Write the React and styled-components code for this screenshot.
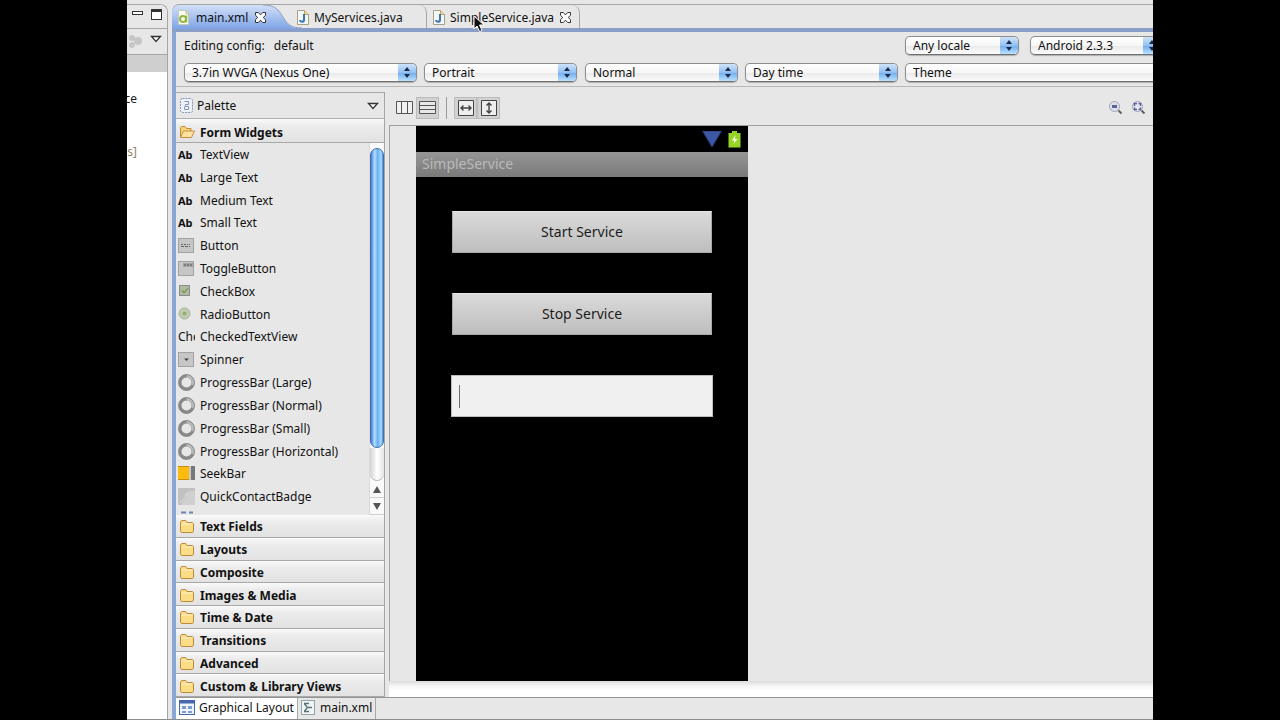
import React from "react";
import styled, { createGlobalStyle, css } from "styled-components";

const GlobalStyle = createGlobalStyle`
  * {
    box-sizing: border-box;
  }
  body {
    margin: 0;
    background: #000;
    color: #111;
    font-family: "Noto Sans", "Open Sans", sans-serif;
    font-size: 12px;
  }
  button,
  select,
  input {
    margin: 0;
    padding: 0;
    border: 0;
    color: inherit;
    font: inherit;
  }
`;

/* window frame */

const Screen = styled.div`
  display: flex;
  height: 100vh;
  padding: 0 127px;
  background: #000;
`;

const Workbench = styled.div`
  flex: 1;
  min-width: 0;
  display: flex;
  flex-direction: column;
  overflow: hidden;
  background: #e7e7e7;
  border-bottom: 1px solid #8c8c8c;
`;

const Panes = styled.div`
  flex: 1;
  min-height: 0;
  display: flex;
  gap: 4px;
  padding-top: 4px;
`;

/* left view, mostly scrolled off */

const SideView = styled.aside`
  width: 41px;
  flex: none;
  display: flex;
  flex-direction: column;
  background: #fff;
  border: 1px solid #a5a5a5;
  border-width: 1px 1px 0 0;
  border-top-right-radius: 8px;
  overflow: hidden;
`;

const SideBar = styled.div`
  display: flex;
  align-items: center;
  justify-content: flex-end;
  gap: 8px;
  height: ${(p) => p.$height}px;
  padding: 0 5px ${(p) => p.$lift || 0}px 0;
  background: #e7e7e7;
  border-bottom: 1px solid #a5a5a5;
`;

const SideSelection = styled.div`
  height: 17px;
  background: #cfcfcf;
`;

const SideLines = styled.div`
  display: flex;
  flex-direction: column;
  align-items: flex-end;
  gap: 35px;
  width: 10px;
  padding-top: 18px;
  line-height: 18px;
`;

const SideLine = styled.span`
  color: ${(p) => (p.$muted ? "#8f8468" : "#1a1a1a")};
`;

/* editor tabs */

const Editor = styled.main`
  flex: 1;
  min-width: 0;
  display: flex;
  flex-direction: column;
  border-left: 4px solid #8aa6d6;
  border-top-left-radius: 8px;
`;

const TabStrip = styled.div`
  flex: none;
  display: flex;
  height: 28px;
  margin-left: -4px;
  border-top: 1px solid #a5a5a5;
  border-bottom: 4px solid #8a9fc8;
  border-top-left-radius: 8px;
`;

const Tab = styled.button`
  position: relative;
  display: flex;
  align-items: center;
  gap: ${(p) => (p.$active ? 6 : 5)}px;
  width: ${(p) => p.$width}px;
  padding: 2px 0 0 ${(p) => (p.$active ? 5 : 6)}px;
  background: none;
  white-space: nowrap;
  ${(p) =>
    !p.$active &&
    css`
      border-right: 1px solid #a5a5a5;
      border-top-right-radius: 8px;
    `}
  > * {
    position: relative;
  }
`;

const TabShape = styled.svg`
  && {
    position: absolute;
    left: 0;
    top: 0;
  }
`;

const Pointer = styled.svg`
  && {
    position: absolute;
    left: 46px;
    top: 10px;
  }
`;

/* configuration rows */

const ConfigRow = styled.div`
  flex: none;
  display: flex;
  align-items: center;
  gap: 7px;
  height: ${(p) => p.$height}px;
  padding-left: 8px;
  overflow: hidden;
  border-bottom: ${(p) => (p.$ruled ? "1px solid #b9b9b9" : "0")};
`;

const ConfigText = styled.span`
  margin-right: ${(p) => (p.$push ? "auto" : "2px")};
`;

const LocaleGroup = styled.div`
  flex: none;
  display: flex;
  gap: 11px;
  width: 248px;
`;

const RowDivider = styled.div`
  width: 1px;
  height: 100%;
  margin: 0 -2px 0 -4px;
  background: #bdbdbd;
`;

const SelectBox = styled.label`
  position: relative;
  flex: none;
  display: flex;
  width: ${(p) => p.$width}px;
  height: 19px;
  border: 1px solid #8d8d8d;
  border-bottom-color: #6f6f6f;
  border-radius: 5px;
  overflow: hidden;
  background: linear-gradient(#fff, #f7f7f7 50%, #e9e9e9 51%, #fbfbfb);
  box-shadow: 0 1px 1px rgba(0, 0, 0, 0.25);

  select {
    appearance: none;
    width: 100%;
    padding-left: 7px;
    background: none;
    line-height: 17px;
    outline: none;
  }
`;

const SelectArrows = styled.svg`
  position: absolute;
  top: 0;
  right: 0;
  width: 18px;
  height: 17px;
  background: linear-gradient(#cfe3fa, #93c0f2 50%, #6fabec 51%, #b9e2ff);
  pointer-events: none;
`;

/* palette */

const Body = styled.div`
  flex: 1;
  min-height: 0;
  display: flex;
`;

const Palette = styled.section`
  flex: none;
  display: flex;
  flex-direction: column;
  width: 209px;
  margin-top: 5px;
  border: 1px solid #a5a5a5;
  border-width: 1px 1px 0 0;
`;

const PaletteHeader = styled.header`
  flex: none;
  display: flex;
  align-items: center;
  gap: 4px;
  height: 26px;
  padding: 0 5px 0 4px;
  border-bottom: 1px solid #b0b0b0;
  span {
    flex: 1;
  }
`;

const Drawer = styled.button`
  display: flex;
  align-items: center;
  gap: 5px;
  width: 100%;
  min-height: 0;
  padding: 2px 0 0 3px;
  background: linear-gradient(#fafafa, #ececec 30%, #e2e2e2);
  border-bottom: 1px solid #a8a8a8;
  color: #111;
  font-weight: 700;
  text-align: left;
`;

const OpenDrawer = styled(Drawer)`
  flex: none;
  height: 24px;
  padding-top: 3px;
`;

const ListArea = styled.div`
  flex: 1;
  min-height: 0;
  display: flex;
  overflow: hidden;
`;

const WidgetList = styled.ul`
  flex: 1;
  display: grid;
  grid-auto-rows: 1fr;
  height: 388px;
  margin: 0;
  padding: 0;
  list-style: none;
`;

const Widget = styled.li`
  display: flex;
  align-items: center;
  gap: 5px;
  padding-left: 2px;
  white-space: nowrap;
`;

const IconSlot = styled.span`
  flex: none;
  display: flex;
  width: 17px;
  overflow: hidden;
  font-size: ${(p) => (p.$bold ? 11 : 12)}px;
  font-weight: ${(p) => (p.$bold ? 700 : 400)};
`;

const ScrollTrack = styled.div`
  display: flex;
  flex-direction: column;
  width: 15px;
  padding-top: 5px;
  background: #fbfbfb;
  border-left: 1px solid #dadada;
`;

const ScrollThumb = styled.div`
  height: 300px;
  border: 1px solid #3f6cb4;
  border-radius: 7px;
  background: linear-gradient(90deg, #3f7fd6, #b5dcff 30%, #6bb0f4 55%, #a5dcff 85%, #4d86c9);
`;

const ScrollRest = styled.div`
  flex: 1;
  border-bottom: 1px solid #b5b5b5;
  border-radius: 0 0 7px 7px;
  background: linear-gradient(90deg, #d3d3d3, #fff 50%, #e4e4e4);
`;

const ScrollArrow = styled.button`
  display: flex;
  align-items: center;
  justify-content: center;
  height: 17px;
  background: #fafafa;
  border-bottom: 1px solid #d0d0d0;
`;

const Drawers = styled.div`
  flex: none;
  display: grid;
  grid-auto-rows: 1fr;
  height: 182px;
`;

/* layout canvas */

const CanvasSide = styled.section`
  flex: 1;
  min-width: 0;
  display: flex;
  flex-direction: column;
  margin-left: 4px;
`;

const CanvasTools = styled.div`
  flex: none;
  display: flex;
  align-items: center;
  height: 38px;
  padding: 3px 3px 0 4px;
`;

const ToolButton = styled.button`
  display: flex;
  align-items: center;
  justify-content: center;
  width: 23px;
  height: 22px;
  background: ${(p) => (p.$pressed ? "#d2d2d2" : "none")};
  outline: ${(p) => (p.$pressed ? "1px solid #bcbcbc" : "0")};
  outline-offset: -1px;
`;

const ToolDivider = styled.div`
  width: 1px;
  height: 22px;
  margin: 0 7px;
  background: #9a9a9a;
`;

const Spacer = styled.div`
  flex: 1;
`;

const Canvas = styled.div`
  flex: 1;
  min-height: 0;
  display: flex;
  padding-left: 26px;
  border: 1px solid #a0a0a0;
  border-width: 1px 0 0 1px;
`;

const HorizontalTrack = styled.div`
  flex: none;
  height: 16px;
  background: linear-gradient(#dcdcdc, #f4f4f4 30%, #fff 60%);
`;

const Device = styled.div`
  display: flex;
  flex-direction: column;
  width: 332px;
  background: #000;
  color: #1c1c1c;
  font-family: "Noto Sans", sans-serif;
  font-size: 14px;
`;

const StatusBar = styled.div`
  display: flex;
  align-items: center;
  justify-content: flex-end;
  gap: 6px;
  height: 26px;
  padding-right: 7px;
`;

const TitleBar = styled.div`
  height: 25px;
  padding-left: 6px;
  background: linear-gradient(#959595, #7a7a7a);
  color: #b9b9b9;
  line-height: 24px;
`;

const DeviceBody = styled.div`
  display: flex;
  flex-direction: column;
  gap: 40px;
  padding: 34px 36px 0;
`;

const DeviceButton = styled.button`
  height: 42px;
  padding-bottom: 2px;
  border: 1px solid #a9a9a9;
  border-top-color: #e6e6e6;
  background: linear-gradient(#dadada, #bebebe);
`;

const EditField = styled.label`
  position: relative;
  display: flex;
  height: 42px;
  margin: 0 -1px;
  border: 1px solid #bdbdbd;
  background: #f0f0f0;
  input {
    flex: 1;
    padding: 0 10px;
    background: none;
    outline: none;
  }
`;

const Caret = styled.span`
  position: absolute;
  left: 7px;
  top: 9px;
  width: 1px;
  height: 23px;
  background: #6f6f6f;
`;

/* bottom page tabs */

const PageTabs = styled.nav`
  flex: none;
  display: flex;
  height: 22px;
  border-top: 1px solid #959595;
`;

const PageTab = styled.button`
  display: flex;
  align-items: center;
  gap: 4px;
  padding: 0 3px 2px;
  background: ${(p) => (p.$active ? "#fff" : "#e7e7e7")};
  border-right: 1px solid #a9a9a9;
  white-space: nowrap;
`;

const CloseIcon = () => (
  <svg width="13" height="13" viewBox="0 0 13 13" fill="#fff" stroke="#333">
    <path d="M1.5 1.5h2.8l2.2 2.4 2.2-2.4h2.8v2.8L9.2 6.5l2.3 2.2v2.8H8.7L6.5 9.2l-2.2 2.3H1.5V8.7l2.3-2.2-2.3-2.2z" />
  </svg>
);

const AndroidFileIcon = () => (
  <svg width="13" height="15" viewBox="0 0 13 15">
    <path d="M1.5.5h7l3 3v11h-10z" fill="#fbfdf6" stroke="#c5cbb4" />
    <path d="M9 1v3h3" fill="none" stroke="#d0b66a" />
    <circle cx="6" cy="9" r="3" fill="none" stroke="#8fb843" strokeWidth="2" />
    <path d="M9.5 5.5v7" stroke="#8fb843" strokeWidth="1.5" />
  </svg>
);

const JavaFileIcon = () => (
  <svg width="12" height="15" viewBox="0 0 12 15">
    <path d="M.5.5h7l4 4v10H.5z" fill="#f3f7fb" stroke="#a8a183" />
    <path d="M7.5.5v4h4" fill="#f5dc9c" stroke="#bda25c" />
    <path d="M7 4v5.5a2 2 0 0 1-4 .5" fill="none" stroke="#3a75ab" strokeWidth="2" />
  </svg>
);

const MenuTriangle = () => (
  <svg width="12" height="8" viewBox="0 0 12 8">
    <path d="M1.5 1.5h9l-4.5 5z" fill="#fff" stroke="#333" strokeWidth="1.3" />
  </svg>
);

const FolderIcon = () => (
  <svg width="16" height="15" viewBox="0 0 16 15">
    <path
      d="M1.5 12V3.2L2.7 1.5h4l1.3 2h5.5l1 1V12l-1 1.5h-11z"
      fill="#fbdc87"
      stroke="#c08a3a"
    />
    <path d="M2.5 5h11" stroke="#fff2c4" />
  </svg>
);

const OpenFolderIcon = () => (
  <svg width="16" height="14" viewBox="0 0 16 14">
    <path d="M1.5 12V2.5l1-1h3.5l1.5 2h4.5V6" fill="#f8d27c" stroke="#c08a3a" />
    <path d="M1.5 12.5l3-6.5h11l-3 6.5z" fill="#fde3a0" stroke="#c98f3c" />
  </svg>
);

const PaletteIcon = () => (
  <svg width="13" height="15" viewBox="0 0 13 15" fill="none">
    <rect x=".5" y=".5" width="12" height="14" rx="2" fill="#eef2f8" stroke="#8195b5" strokeDasharray="2 1" />
    <path d="M4.5 3.5h4v3h-3v2h3v3h-4v-3" stroke="#8397bb" />
  </svg>
);

const PixelBox = ({ children }) => (
  <svg width="16" height="16" viewBox="0 0 16 16">
    <rect x=".5" y=".5" width="15" height="14" fill="#c6c6c6" stroke="#a2a2a2" />
    {children}
  </svg>
);

const RingIcon = () => (
  <svg width="17" height="17" viewBox="0 0 17 17" fill="none" strokeWidth="3">
    <circle cx="8.5" cy="8.5" r="6.5" stroke="#8a8a8a" />
    <path d="M8.5 2a6.5 6.5 0 0 1 6 9" stroke="#b9b9b9" />
    <circle cx="8.5" cy="8.5" r="8" stroke="#777" strokeWidth=".7" />
  </svg>
);

const widgetIcons = {
  button: (
    <PixelBox>
      <path d="M3 6.5h2m1 0h2m1 0h1m1 0h1M3 8.5h3m1 0h3m1 0h1" stroke="#666" />
    </PixelBox>
  ),
  toggle: (
    <PixelBox>
      <rect x="5" y="2" width="10" height="4" fill="#a5a5a5" />
      <path d="M6 4h2m1 0h2m1 0h2" stroke="#555" />
    </PixelBox>
  ),
  check: (
    <svg width="14" height="16" viewBox="0 0 14 16">
      <rect x="1.5" y="2.5" width="10" height="10" fill="#aeb99f" stroke="#8c8c8c" />
      <path d="M4 7.5l2 2 4-4" fill="none" stroke="#7b9b59" strokeWidth="1.5" />
    </svg>
  ),
  radio: (
    <svg width="14" height="16" viewBox="0 0 14 16">
      <circle cx="6.5" cy="7.5" r="5.5" fill="#c0ccb2" stroke="#a3b292" />
      <circle cx="6.5" cy="7.5" r="2" fill="#94ad79" />
    </svg>
  ),
  spinner: (
    <PixelBox>
      <path d="M6 6.5h5L8.5 9z" fill="#444" />
    </PixelBox>
  ),
  ring: <RingIcon />,
  seek: (
    <svg width="17" height="15" viewBox="0 0 17 15">
      <rect width="11" height="14" fill="#fdbb0d" />
      <path d="M0 .5h11M0 13.5h11" stroke="#c48f15" />
      <rect x="11" width="2" height="14" fill="#c9c9c9" />
      <rect x="13" width="4" height="14" fill="#777" />
    </svg>
  ),
  badge: (
    <svg width="17" height="17" viewBox="0 0 17 17">
      <rect width="17" height="17" fill="#c1c1c1" />
      <path d="M4 17c0-5 3-6 5-6-3-5 2-9 8-8v14z" fill="#d0d0d0" />
      <path d="M2 15c2-4 4-3 5-5s0-5 3-6" stroke="#dedede" fill="none" />
    </svg>
  ),
  clipped: (
    <svg width="17" height="17" viewBox="0 0 17 17">
      <path d="M3 1.5h5m3 0h4" stroke="#6d86b5" strokeWidth="2" />
    </svg>
  ),
};

const widgets = [
  { name: "TextView", text: "Ab", bold: true },
  { name: "Large Text", text: "Ab", bold: true },
  { name: "Medium Text", text: "Ab", bold: true },
  { name: "Small Text", text: "Ab", bold: true },
  { name: "Button", icon: "button" },
  { name: "ToggleButton", icon: "toggle" },
  { name: "CheckBox", icon: "check" },
  { name: "RadioButton", icon: "radio" },
  { name: "CheckedTextView", text: "Che" },
  { name: "Spinner", icon: "spinner" },
  { name: "ProgressBar (Large)", icon: "ring" },
  { name: "ProgressBar (Normal)", icon: "ring" },
  { name: "ProgressBar (Small)", icon: "ring" },
  { name: "ProgressBar (Horizontal)", icon: "ring" },
  { name: "SeekBar", icon: "seek" },
  { name: "QuickContactBadge", icon: "badge" },
  { name: "", icon: "clipped" },
];

const drawers = [
  "Text Fields",
  "Layouts",
  "Composite",
  "Images & Media",
  "Time & Date",
  "Transitions",
  "Advanced",
  "Custom & Library Views",
];

const Select = ({ label, value, width }) => (
  <SelectBox $width={width}>
    <select aria-label={label} defaultValue={value}>
      <option>{value}</option>
    </select>
    <SelectArrows viewBox="0 0 18 17">
      <path d="M6 7l3-4 3 4zM6 10l3 4 3-4z" fill="#1c2c48" />
    </SelectArrows>
  </SelectBox>
);

const SidePane = () => (
  <SideView>
    <SideBar $height={24} $lift={4}>
      <svg width="11" height="13" viewBox="0 0 11 13">
        <rect x=".5" y="3.5" width="10" height="3" fill="#fff" stroke="#333" />
      </svg>
      <svg width="11" height="11" viewBox="0 0 11 11">
        <rect x=".5" y=".5" width="10" height="10" fill="#fff" stroke="#333" />
        <path d="M0 2h11" stroke="#333" strokeWidth="2" />
      </svg>
    </SideBar>
    <SideBar $height={26} $lift={6}>
      <svg width="14" height="20" viewBox="0 0 14 20" fill="#c6c6c6">
        <circle cx="4" cy="9" r="3" />
        <circle cx="10" cy="12" r="4" />
        <circle cx="4" cy="16" r="3" />
      </svg>
      <MenuTriangle />
    </SideBar>
    <SideSelection />
    <SideLines>
      <SideLine>ce</SideLine>
      <SideLine $muted>s]</SideLine>
    </SideLines>
  </SideView>
);

const EditorTabs = () => (
  <TabStrip>
    <Tab $width={119} $active>
      <TabShape width="130" height="24" viewBox="0 0 130 24">
        <defs>
          <linearGradient id="tab" x1="0" y1="0" x2="0" y2="1">
            <stop offset="0" stopColor="#d3e0f8" />
            <stop offset="1" stopColor="#7da3e6" />
          </linearGradient>
        </defs>
        <path d="M0 24V8q0-8 8-8h83c12 0 16 5 20 12s8 12 19 12z" fill="url(#tab)" />
        <path d="M91 0c12 0 16 5 20 12s8 11 19 11" fill="none" stroke="#8fa0bf" />
      </TabShape>
      <AndroidFileIcon />
      <span>main.xml</span>
      <CloseIcon />
    </Tab>
    <Tab $width={136}>
      <JavaFileIcon />
      <span>MyServices.java</span>
    </Tab>
    <Tab $width={153}>
      <JavaFileIcon />
      <span>SimpleService.java</span>
      <CloseIcon />
      <Pointer width="12" height="18" viewBox="0 0 12 18">
        <path d="M1 1v13l3-3 2.5 5.5 2.5-1L6.5 10H11z" fill="#111" stroke="#fff" />
      </Pointer>
    </Tab>
  </TabStrip>
);

const PalettePane = () => (
  <Palette>
    <PaletteHeader>
      <PaletteIcon />
      <span>Palette</span>
      <MenuTriangle />
    </PaletteHeader>
    <OpenDrawer>
      <OpenFolderIcon />
      Form Widgets
    </OpenDrawer>
    <ListArea>
      <WidgetList>
        {widgets.map((w) => (
          <Widget key={w.name}>
            <IconSlot $bold={w.bold}>{w.text || widgetIcons[w.icon]}</IconSlot>
            {w.name}
          </Widget>
        ))}
      </WidgetList>
      <ScrollTrack>
        <ScrollThumb />
        <ScrollRest />
        <ScrollArrow aria-label="Scroll up">
          <svg width="8" height="7" viewBox="0 0 8 7">
            <path d="M4 0l4 7H0z" fill="#555" />
          </svg>
        </ScrollArrow>
        <ScrollArrow aria-label="Scroll down">
          <svg width="8" height="7" viewBox="0 0 8 7">
            <path d="M4 7l4-7H0z" fill="#555" />
          </svg>
        </ScrollArrow>
      </ScrollTrack>
    </ListArea>
    <Drawers>
      {drawers.map((name) => (
        <Drawer key={name}>
          <FolderIcon />
          {name}
        </Drawer>
      ))}
    </Drawers>
  </Palette>
);

const Toolbar = () => (
  <CanvasTools>
    <ToolButton aria-label="Columns">
      <svg width="17" height="15" viewBox="0 0 17 15" fill="#f2f2f2" stroke="#555">
        <path d="M.5 1.5h16v12H.5zM5.5 1.5v12M11.5 1.5v12" />
      </svg>
    </ToolButton>
    <ToolButton $pressed aria-label="Rows">
      <svg width="17" height="15" viewBox="0 0 17 15" fill="#e8e8e8" stroke="#555">
        <path d="M.5 1.5h16v12H.5zM.5 5.5h16M.5 9.5h16" />
      </svg>
    </ToolButton>
    <ToolDivider />
    <ToolButton $pressed aria-label="Fill width">
      <svg width="16" height="16" viewBox="0 0 16 16" fill="none" stroke="#444">
        <path d="M.5.5h15v15H.5z" fill="#eee" />
        <path d="M3 8h10M5.5 5.5L3 8l2.5 2.5M10.5 5.5L13 8l-2.5 2.5" strokeWidth="1.4" />
      </svg>
    </ToolButton>
    <ToolButton $pressed aria-label="Fill height">
      <svg width="16" height="16" viewBox="0 0 16 16" fill="none" stroke="#444">
        <path d="M.5.5h15v15H.5z" fill="#eee" />
        <path d="M8 3v10M5.5 5.5L8 3l2.5 2.5M5.5 10.5L8 13l2.5-2.5" strokeWidth="1.4" />
      </svg>
    </ToolButton>
    <Spacer />
    <ToolButton aria-label="Zoom to actual size">
      <svg width="15" height="15" viewBox="0 0 15 15">
        <circle cx="6.5" cy="6.5" r="5" fill="#dcdfec" stroke="#a3a3bb" />
        <path d="M4 5h5v3H4z" fill="#5f6294" />
        <path d="M10.5 10.5l3 3" stroke="#665f5a" strokeWidth="2" />
      </svg>
    </ToolButton>
    <ToolButton aria-label="Zoom to fit">
      <svg width="15" height="15" viewBox="0 0 15 15">
        <circle cx="6.5" cy="6.5" r="5" fill="#e4e6f0" stroke="#a3a3bb" />
        <path d="M3.5 6V3.5H6m1.500 0h2V6m0 1.500v2h-2m-1.500 0H3.500V7.500" fill="none" stroke="#5f6294" strokeWidth="1.5" />
        <path d="M10.5 10.5l3 3" stroke="#665f5a" strokeWidth="2" />
      </svg>
    </ToolButton>
  </CanvasTools>
);

const Preview = () => (
  <Device>
    <StatusBar>
      <svg width="20" height="16" viewBox="0 0 20 16">
        <path d="M.5 0h19L10 16z" fill="#3c57a3" stroke="#2a3b70" />
      </svg>
      <svg width="13" height="17" viewBox="0 0 13 17">
        <path d="M4 0h5v2h3.5v14.5H.5V2H4z" fill="#97d42a" />
        <path d="M7.5 4L4 9.5h2.5L5.5 13 9.5 8H7z" fill="#f6ffe0" />
      </svg>
    </StatusBar>
    <TitleBar>SimpleService</TitleBar>
    <DeviceBody>
      <DeviceButton>Start Service</DeviceButton>
      <DeviceButton>Stop Service</DeviceButton>
      <EditField>
        <input type="text" aria-label="Text" />
        <Caret />
      </EditField>
    </DeviceBody>
  </Device>
);

const App = () => {
  return (
    <Screen>
      <GlobalStyle />
      <Workbench>
        <Panes>
          <SidePane />
          <Editor>
            <EditorTabs />
            <ConfigRow $height={27}>
              <ConfigText>Editing config:</ConfigText>
              <ConfigText $push>default</ConfigText>
              <LocaleGroup>
                <Select label="Locale" value="Any locale" width={114} />
                <Select label="Target" value="Android 2.3.3" width={132} />
              </LocaleGroup>
            </ConfigRow>
            <ConfigRow $height={28} $ruled>
              <Select label="Device" value="3.7in WVGA (Nexus One)" width={233} />
              <Select label="Orientation" value="Portrait" width={153} />
              <RowDivider />
              <Select label="Dock mode" value="Normal" width={153} />
              <Select label="Day or night" value="Day time" width={153} />
              <Select label="Theme" value="Theme" width={320} />
            </ConfigRow>
            <Body>
              <PalettePane />
              <CanvasSide>
                <Toolbar />
                <Canvas>
                  <Preview />
                </Canvas>
                <HorizontalTrack />
              </CanvasSide>
            </Body>
            <PageTabs>
              <PageTab $active>
                <svg width="16" height="15" viewBox="0 0 16 15">
                  <rect x=".5" y=".5" width="15" height="14" fill="#eef3fc" stroke="#4668ab" />
                  <path d="M1 2h14" stroke="#4668ab" strokeWidth="3" />
                  <path d="M3 6h4v3H3zM9 6h4v3H9zM3 11h4v2H3zM9 11h4v2H9z" fill="#7f9ad0" />
                </svg>
                Graphical Layout
              </PageTab>
              <PageTab>
                <svg width="15" height="15" viewBox="0 0 15 15">
                  <rect x=".5" y=".5" width="13" height="14" fill="#f1f5f4" stroke="#92a5a8" />
                  <path d="M3 3.500h5M3 11.500h5M3.500 4l3 3.500-3 3.500M7 7.500h4" fill="none" stroke="#537279" strokeWidth="1.3" />
                </svg>
                main.xml
              </PageTab>
            </PageTabs>
          </Editor>
        </Panes>
      </Workbench>
    </Screen>
  );
};

export default App;
